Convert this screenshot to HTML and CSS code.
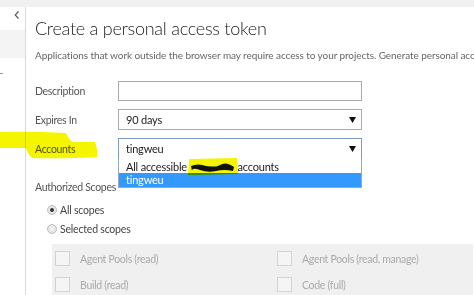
FILE: index.html
```html
<!DOCTYPE html>
<html lang="en">
<head>
    <meta charset="UTF-8">
    <title>Create a personal access token</title>
    <link rel="stylesheet" href="styles.css">
</head>
<body>
    <div class="topbar"></div>
    <div class="layout">
        <div class="sidebar">
            <svg class="collapse" width="6" height="8" viewBox="0 0 6 8"><path d="M4.5 0.5 L1.2 4 L4.5 7.5" fill="none" stroke="#555" stroke-width="1.1"/></svg>
            <div class="nav-item active"></div>
            <div class="nav-dash"></div>
        </div>

        <div class="panel">
            <h1>Create a personal access token</h1>
            <p class="intro">Applications that work outside the browser may require access to your projects. Generate personal access tokens for them.</p>

            <div class="form-row">
                <label>Description</label>
                <div class="text-input"></div>
            </div>
            <div class="form-row tall">
                <label>Expires In</label>
                <div class="select">
                    <span>90 days</span>
                    <svg class="caret" width="7" height="6" viewBox="0 0 7 6"><path d="M0 0 H7 L3.5 6 Z" fill="#111"/></svg>
                </div>
            </div>
            <div class="form-row tall">
                <label>Accounts</label>
                <div class="select open">
                    <span>tingweu</span>
                    <svg class="caret" width="7" height="6" viewBox="0 0 7 6"><path d="M0 0 H7 L3.5 6 Z" fill="#111"/></svg>
                    <div class="dropdown">
                        <div class="option">All accessible <span class="redacted"><svg width="50" height="17" viewBox="0 0 50 17"><path d="M1 1 L49 0 L50 16 L0 17 Z" fill="#f5f500"/><path d="M3 8 Q10 5 18 8 T32 7 T46 9 L45 13 Q36 11 28 13 T12 12 T4 13 Z" fill="#111"/><path d="M6 9 L44 10" stroke="#111" stroke-width="2"/></svg></span>accounts</div>
                        <div class="option selected">tingweu</div>
                    </div>
                </div>
            </div>

            <div class="scopes-label">Authorized Scopes</div>
            <div class="radio-list">
                <div class="radio-row"><span class="radio checked"></span>All scopes</div>
                <div class="radio-row"><span class="radio"></span>Selected scopes</div>
            </div>

            <div class="scopes-box">
                <div class="scope"><span class="checkbox"></span>Agent Pools (read)</div>
                <div class="scope"><span class="checkbox"></span>Agent Pools (read, manage)</div>
                <div class="scope"><span class="checkbox"></span>Build (read)</div>
                <div class="scope"><span class="checkbox"></span>Code (full)</div>
            </div>
        </div>
    </div>

    <!-- marker stroke drawn over the screenshot -->
    <svg class="highlight" width="100" height="32" viewBox="0 0 100 32"><path d="M0 2 Q30 1 66 3 Q69 10 73 12 L95 12 Q98 20 97 27 Q60 29 32 28 Q27 23 26 18 L0 18 Z" fill="#f5f500"/></svg>
</body>
</html>
```

FILE: styles.css
```css
body {
    margin: 0;
    font-family: Lato, "Open Sans", sans-serif;
    background-color: #fff;
    color: #333;
    width: 474px;
    height: 295px;
    overflow: hidden;
    position: relative;
}

.topbar {
    height: 7px;
    background-color: #f1f1f1;
}

.layout {
    display: flex;
    height: 288px;
}

.sidebar {
    width: 25px;
    flex-shrink: 0;
    border-right: 1px solid #d9d9d9;
}

.collapse {
    display: block;
    margin: 4px 0 0 14px;
}

.nav-item {
    height: 28px;
    margin-top: 11px;
}

.nav-item.active {
    background-color: #f4f4f4;
}

.nav-dash {
    width: 3px;
    height: 1px;
    margin-top: 15px;
    background-color: #999;
}

.panel {
    flex: 1;
    padding-left: 9px;
    overflow: hidden;
    position: relative;
}

h1 {
    margin: 0;
    padding-top: 9px;
    font-size: 18px;
    font-weight: 300;
    line-height: 24px;
    letter-spacing: -0.25px;
    color: #222;
}

.intro {
    margin: 8px 0 0;
    font-size: 10px;
    line-height: 14px;
    letter-spacing: -0.08px;
    color: #666;
    white-space: nowrap;
}

.form-row {
    display: flex;
    align-items: center;
    height: 20px;
    margin-top: 19px;
}

.form-row.tall {
    height: 21px;
    margin-top: 8px;
}

.form-row label {
    width: 83px;
    font-size: 10.5px;
    letter-spacing: -0.3px;
    color: #555;
}

.text-input,
.select {
    width: 244px;
    height: 100%;
    box-sizing: border-box;
    border: 1px solid #ababab;
    background-color: #fff;
}

.select {
    display: flex;
    align-items: center;
    justify-content: space-between;
    padding: 0 5px 0 7px;
    font-size: 11px;
    letter-spacing: -0.2px;
    color: #222;
    position: relative;
}

.select.open {
    border-color: #7f9dc9;
}

.caret {
    display: block;
}

.dropdown {
    position: absolute;
    top: 100%;
    left: -1px;
    right: -1px;
    border: 1px solid #9aa9c2;
    border-top: none;
    background-color: #fff;
}

.option {
    height: 15px;
    line-height: 15px;
    padding-left: 7px;
    white-space: nowrap;
}

.option.selected {
    height: 14px;
    line-height: 14px;
    background-color: #3399ff;
    color: #fff;
}

.redacted svg {
    display: inline-block;
    vertical-align: -4px;
    margin-left: -2px;
    mix-blend-mode: multiply;
}

.scopes-label {
    margin-top: 21px;
    font-size: 10.5px;
    line-height: 14px;
    letter-spacing: -0.3px;
    color: #555;
}

.radio-list {
    margin-top: 6px;
    padding-left: 12px;
}

.radio-row {
    display: flex;
    align-items: center;
    height: 19px;
    font-size: 10.5px;
    letter-spacing: -0.2px;
    color: #444;
}

.radio {
    width: 10px;
    height: 10px;
    box-sizing: border-box;
    margin-right: 3px;
    border: 1px solid #bdbdbd;
    border-radius: 50%;
    background: radial-gradient(circle, #f6f6f6, #dcdcdc);
    position: relative;
}

.radio.checked::after {
    content: "";
    position: absolute;
    top: 2px;
    left: 2px;
    width: 4px;
    height: 4px;
    border-radius: 50%;
    background-color: #333;
}

.scopes-box {
    margin: 6px 1px 0 17px;
    height: 60px;
    padding: 7px 0 0 3px;
    background-color: #f0f0f0;
    display: grid;
    grid-template-columns: 222px 1fr;
    row-gap: 11px;
    align-content: start;
}

.scope {
    display: flex;
    align-items: center;
    height: 15px;
    font-size: 10.5px;
    letter-spacing: -0.3px;
    color: #aaa;
}

.checkbox {
    width: 15px;
    height: 15px;
    box-sizing: border-box;
    margin-right: 10px;
    border: 1px solid #d3d3d3;
    background-color: #f5f5f5;
}

.highlight {
    position: absolute;
    top: 130px;
    left: 0;
    mix-blend-mode: multiply;
}
```
